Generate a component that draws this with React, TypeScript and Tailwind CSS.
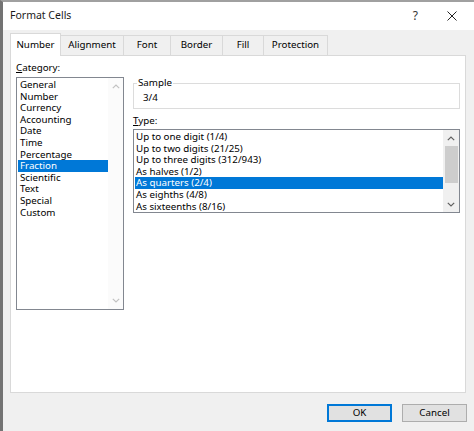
import React from 'react';

const categories = [
  'General',
  'Number',
  'Currency',
  'Accounting',
  'Date',
  'Time',
  'Percentage',
  'Fraction',
  'Scientific',
  'Text',
  'Special',
  'Custom',
];

const types = [
  'Up to one digit (1/4)',
  'Up to two digits (21/25)',
  'Up to three digits (312/943)',
  'As halves (1/2)',
  'As quarters (2/4)',
  'As eighths (4/8)',
  'As sixteenths (8/16)',
];

const tabs = [
  { label: 'Number', w: 'w-[51px]' },
  { label: 'Alignment', w: 'w-[63px]' },
  { label: 'Font', w: 'w-[47px]' },
  { label: 'Border', w: 'w-[52px]' },
  { label: 'Fill', w: 'w-[41px]' },
  { label: 'Protection', w: 'w-[64px]' },
];

const Chevron: React.FC<{ down?: boolean; color: string }> = ({ down, color }) => (
  <svg width="8" height="5" viewBox="0 0 8 5" className={down ? 'rotate-180' : ''}>
    <path d="M0.8 4.2 L4 1 L7.2 4.2" fill="none" stroke={color} strokeWidth="1.2" />
  </svg>
);

const App: React.FC = () => {
  return (
    <div className="w-[474px] h-[431px] overflow-hidden border-l-[3px] border-t-[2px] border-l-[#737373] border-t-[#a0a0a0] bg-[#f0f0f0] flex flex-col text-black font-['Noto_Sans',sans-serif] text-[9.75px]">
      {/* title bar */}
      <div className="h-[28px] bg-white flex items-center pl-[7px] pr-[17px] shrink-0">
        <span className="text-[10.5px] text-[#1a1a1a]">Format Cells</span>
        <span className="ml-auto text-[12px] text-[#333]">?</span>
        <svg className="ml-[29px]" width="10" height="10" viewBox="0 0 10 10">
          <path d="M0.5 0.5 L9.5 9.5 M9.5 0.5 L0.5 9.5" stroke="#222" strokeWidth="1" />
        </svg>
      </div>

      {/* tabs */}
      <div className="flex items-end h-[22px] mt-[3px] pl-[7px] shrink-0">
        {tabs.map((t, i) =>
          i === 0 ? (
            <div
              key={t.label}
              className={`${t.w} h-[23px] -mb-px relative z-10 bg-white border border-b-0 border-[#d9d9d9] flex items-center justify-center`}
            >
              {t.label}
            </div>
          ) : (
            <div
              key={t.label}
              className={`${t.w} h-[20px] bg-[#f0f0f0] border border-b-0 border-l-0 border-[#d9d9d9] flex items-center justify-center`}
            >
              {t.label}
            </div>
          )
        )}
      </div>

      {/* panel */}
      <div className="ml-[7px] mr-[8px] h-[338px] shrink-0 bg-white border border-[#d9d9d9] flex px-[5px] pt-[5px]">
        {/* left column */}
        <div className="w-[108px] flex flex-col">
          <div className="h-[14px] leading-[14px]">
            <span className="underline underline-offset-1">C</span>ategory:
          </div>
          <div className="mt-[2px] h-[233px] border border-[#828790] bg-white flex">
            <div className="flex-1 pt-[1px] pl-[1px]">
              {categories.map((c) => (
                <div
                  key={c}
                  className={`h-[11.6px] leading-[11.6px] pl-[2px] ${c === 'Fraction' ? 'bg-[#0078d7] text-white' : ''}`}
                >
                  {c}
                </div>
              ))}
            </div>
            <div className="w-[15px] bg-[#fbfbfb] flex flex-col items-center justify-between py-[6px]">
              <Chevron color="#c2c2c2" />
              <Chevron down color="#c2c2c2" />
            </div>
          </div>
        </div>

        {/* right column */}
        <div className="flex-1 ml-[9px] mt-[16px] flex flex-col">
          <fieldset className="h-[32px] border border-[#dcdcdc]">
            <legend className="ml-[3px] px-[1px] leading-[12px]">Sample</legend>
            <div className="pl-[9px] pt-[3px] leading-[12px]">3/4</div>
          </fieldset>
          <div className="mt-[6px] h-[12px] leading-[12px]">
            <span className="underline underline-offset-1">T</span>ype:
          </div>
          <div className="mt-[2px] h-[84px] border border-[#828790] bg-white flex">
            <div className="flex-1 pt-[1px] pl-[1px]">
              {types.map((t) => (
                <div
                  key={t}
                  className={`h-[11.6px] leading-[11.6px] pl-[1px] ${t === 'As quarters (2/4)' ? 'bg-[#0078d7] text-white' : ''}`}
                >
                  {t}
                </div>
              ))}
            </div>
            <div className="w-[16px] bg-[#f0f0f0] flex flex-col items-center">
              <div className="h-[16px] flex items-center justify-center">
                <Chevron color="#606060" />
              </div>
              <div className="w-[13px] h-[37px] bg-[#cdcdcd]" />
              <div className="mt-auto h-[16px] flex items-center justify-center">
                <Chevron down color="#606060" />
              </div>
            </div>
          </div>
        </div>
      </div>

      {/* buttons */}
      <div className="flex justify-end gap-[10px] pr-[7px] mt-[11px]">
        <button className="w-[65px] h-[18px] bg-[#e1e1e1] border-2 border-[#0078d7] flex items-center justify-center">
          OK
        </button>
        <button className="w-[65px] h-[18px] bg-[#e1e1e1] border border-[#adadad] flex items-center justify-center">
          Cancel
        </button>
      </div>
    </div>
  );
};

export default App;
